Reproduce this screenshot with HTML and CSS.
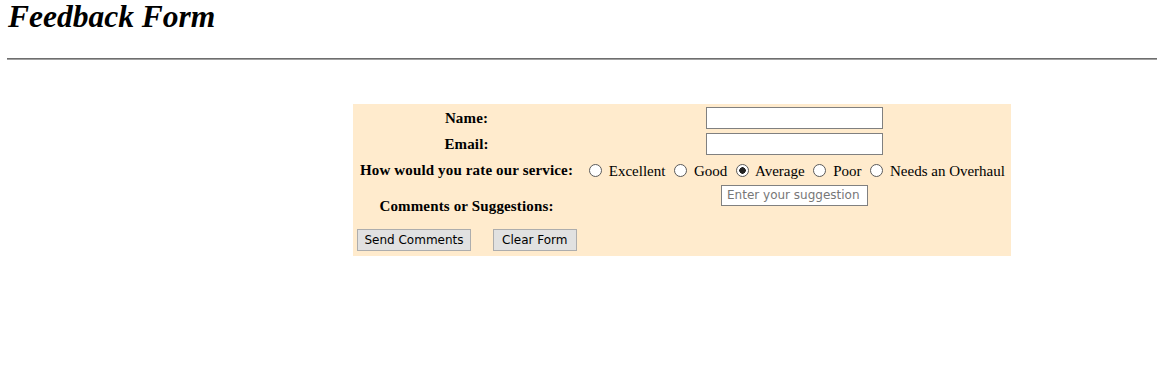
FILE: index.html
```html
<!DOCTYPE html>
<html lang="en">
<head>
    <meta charset="UTF-8">
    <title>Feedback Form</title>
    <link rel="stylesheet" href="styles.css">
</head>
<body>
    <h1 class="page-title">Feedback Form</h1>
    <hr class="rule">

    <form class="feedback-form">
        <table class="form-table">
            <tr>
                <th>Name:</th>
                <td><input type="text" class="text-field" name="name"></td>
            </tr>
            <tr>
                <th>Email:</th>
                <td><input type="text" class="text-field" name="email"></td>
            </tr>
            <tr>
                <th>How would you rate our service:</th>
                <td class="rating">
                    <input type="radio" name="rating" value="excellent"> Excellent
                    <input type="radio" name="rating" value="good"> Good
                    <input type="radio" name="rating" value="average" checked> Average
                    <input type="radio" name="rating" value="poor"> Poor
                    <input type="radio" name="rating" value="overhaul"> Needs an Overhaul
                </td>
            </tr>
            <tr class="comments-row">
                <th>Comments or Suggestions:</th>
                <td><textarea class="suggestion" rows="1" placeholder="Enter your suggestion"></textarea></td>
            </tr>
            <tr class="buttons-row">
                <td class="buttons">
                    <button type="submit" class="btn btn-send">Send Comments</button>
                    <button type="reset" class="btn btn-clear">Clear Form</button>
                </td>
                <td></td>
            </tr>
        </table>
    </form>
</body>
</html>
```

FILE: styles.css
```css
body {
    margin: 0;
    padding: 0 0 0 7px;
    font-family: "Liberation Serif", "Times New Roman", serif;
    background-color: #fff;
    color: #000;
}

.page-title {
    font-size: 31.5px;
    font-style: italic;
    font-weight: bold;
    margin: -1px 0 0 1px;
    line-height: 36px;
}

.rule {
    margin: 23px 0 0 0;
    border: none;
    border-top: 1px solid #6e6e6e;
    border-bottom: 1px solid #a0a0a0;
    height: 0;
}

.feedback-form {
    margin: 44px 0 0 346px;
}

.form-table {
    width: 658px;
    background-color: #ffebcd;
    border-spacing: 2px;
    font-size: 15px;
}

.form-table th {
    width: 221px;
    padding: 1px;
    text-align: center;
    font-weight: bold;
    letter-spacing: 0.15px;
}

.form-table td {
    padding: 1px;
    text-align: center;
}

.text-field {
    width: 177px;
    height: 22px;
    box-sizing: border-box;
    border: 1px solid #808080;
    background: #fff;
    padding: 1px 2px;
    margin: 0;
}

.rating {
    white-space: nowrap;
    height: 22px;
}

.rating input[type="radio"] {
    appearance: none;
    width: 13px;
    height: 13px;
    margin: 3px 3px 0 5px;
    border: 1px solid #5a5a5a;
    border-radius: 50%;
    background: #fff;
    vertical-align: -1px;
    box-sizing: border-box;
}

.rating input[type="radio"]:checked {
    background: radial-gradient(circle, #222 0 3px, #fff 3.5px);
}

.comments-row th {
    padding-top: 4px;
}

.comments-row td {
    vertical-align: top;
    padding-bottom: 20px;
}

.suggestion {
    display: block;
    margin: 0 auto;
    width: 147px;
    height: 21px;
    box-sizing: border-box;
    border: 1px solid #808080;
    padding: 2px 5px;
    resize: none;
    overflow: hidden;
    font-family: "DejaVu Sans", sans-serif;
    font-size: 12px;
    line-height: 14px;
}

.suggestion::placeholder {
    color: #777;
}

.buttons-row td {
    padding-bottom: 3px;
}

.buttons {
    text-align: left !important;
    white-space: nowrap;
}

.btn {
    height: 22px;
    padding: 0;
    background-color: #e1e1e1;
    border: 1px solid #adadad;
    border-radius: 0;
    font-family: "DejaVu Sans", sans-serif;
    font-size: 12px;
    color: #000;
    margin: 0;
}

.btn-send {
    width: 114px;
    margin-left: 1px;
}

.btn-clear {
    width: 84px;
    margin-left: 18px;
}
```
